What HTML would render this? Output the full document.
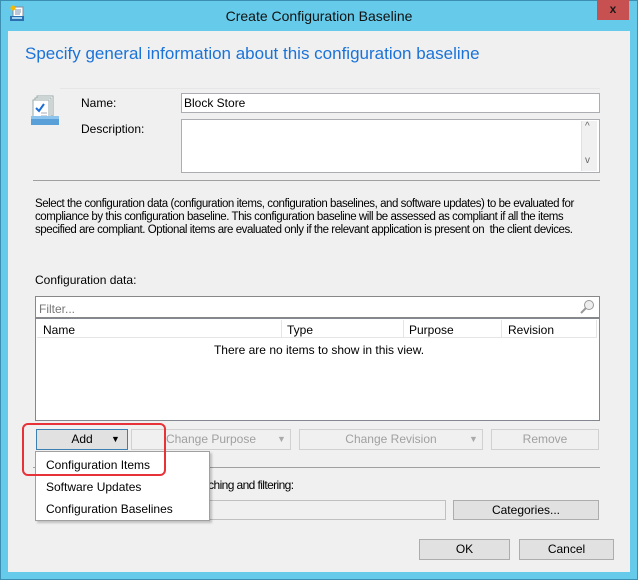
<!DOCTYPE html>
<html><head><style>
*{margin:0;padding:0;box-sizing:border-box}
body{width:638px;height:580px;background:#66cbea;font-family:"Liberation Sans",sans-serif;font-size:12px;color:#000;position:relative;overflow:hidden}
.a{position:absolute}
.box{position:absolute;background:#fff;border:1px solid #abadb3}
.btn{position:absolute;background:#e1e1e1;border:1px solid #adadad;text-align:center;line-height:18px}
.dis{background:#f0f0f0;border-color:#d0d0d0;color:#a0a0a0}
.t{position:absolute;white-space:nowrap;transform-origin:0 0}
</style></head><body>
<div class="a" style="left:0;top:0;width:638px;height:580px;border:1px solid #3c8fb0"></div>
<div class="a" style="left:597px;top:0;width:32px;height:20px;background:#c75050;font-weight:bold;text-align:center;line-height:19px;font-size:12px;color:#1a1a1a">x</div>
<svg class="a" style="left:8px;top:5px" width="18" height="18"><rect x="5" y="2" width="10" height="10" fill="#fff" stroke="#889"/><path d="M7 5h6M7 7h6M7 9h5" stroke="#7a8fb0"/><rect x="2" y="11" width="14" height="5" fill="#2a6fb0"/><rect x="4" y="12" width="10" height="2" fill="#9fd0f0"/><circle cx="5" cy="3" r="2.5" fill="#f5b800"/></svg>
<div class="t" style="left:0;width:638px;text-align:center;top:8px;font-size:14px;color:#111">Create Configuration Baseline</div>
<div class="a" style="left:8px;top:31px;width:622px;height:541px;background:#f0f0f0"></div>
<div class="t" style="left:25px;top:44px;font-size:17px;color:#1a73d9">Specify general information about this configuration baseline</div>
<div class="a" style="left:60px;top:88px;width:540px;height:1px;background:#e6e6e6"></div>
<svg class="a" style="left:28px;top:94px" width="34" height="34"><rect x="9" y="2" width="16" height="20" fill="#fff" stroke="#9aa"/><rect x="7" y="4" width="16" height="20" fill="#fff" stroke="#9aa"/><rect x="5" y="6" width="16" height="20" fill="#fff" stroke="#9aa"/><path d="M8 14l3 3 5-7" stroke="#1a6ed8" stroke-width="2" fill="none"/><path d="M13 19h6M13 22h6" stroke="#aab"/><path d="M3 22h28v9H3z" fill="#5aa0d8"/><path d="M3 22h28v3H3z" fill="#8cc4ee"/></svg>
<div class="t" style="left:81px;top:96px">Name:</div>
<div class="box" style="left:181px;top:93px;width:419px;height:20px"></div>
<div class="t" style="left:184px;top:96px">Block Store</div>
<div class="t" style="left:81px;top:122px">Description:</div>
<div class="box" style="left:181px;top:119px;width:419px;height:54px"></div>
<div class="a" style="left:581px;top:121px;width:16px;height:50px;background:#f0f0f0;border-left:1px solid #e0e0e0"></div>
<div class="t" style="left:585px;top:121px;font-size:10px;color:#666">^</div>
<div class="t" style="left:585px;top:155px;font-size:10px;color:#666">v</div>
<div class="a" style="left:33px;top:180px;width:567px;height:1px;background:#a0a0a0"></div>
<div class="t" style="left:35px;top:198px;font-size:11.5px;line-height:13px;letter-spacing:-0.45px">Select the configuration data (configuration items, configuration baselines, and software updates) to be evaluated for<br>compliance by this configuration baseline. This configuration baseline will be assessed as compliant if all the items<br>specified are compliant. Optional items are evaluated only if the relevant application is present on &nbsp;the client devices.</div>
<div class="t" style="left:35px;top:273px">Configuration data:</div>
<div class="box" style="left:35px;top:296px;width:565px;height:22px;border-color:#888"></div>
<div class="t" style="left:39px;top:302px;color:#777">Filter...</div>
<svg class="a" style="left:579px;top:299px" width="16" height="16"><circle cx="10" cy="6" r="4.5" fill="#eee" stroke="#999"/><path d="M7 9l-5 5" stroke="#999" stroke-width="2"/></svg>
<div class="box" style="left:35px;top:318px;width:565px;height:103px;border-color:#828790"></div>
<div class="a" style="left:37px;top:320px;width:559px;height:18px;border-bottom:1px solid #e5e5e5"></div>
<div class="a" style="left:281px;top:320px;width:1px;height:18px;background:#e5e5e5"></div>
<div class="a" style="left:403px;top:320px;width:1px;height:18px;background:#e5e5e5"></div>
<div class="a" style="left:501px;top:320px;width:1px;height:18px;background:#e5e5e5"></div>
<div class="a" style="left:596px;top:320px;width:1px;height:18px;background:#e5e5e5"></div>
<div class="t" style="left:43px;top:323px">Name</div>
<div class="t" style="left:287px;top:323px">Type</div>
<div class="t" style="left:409px;top:323px">Purpose</div>
<div class="t" style="left:508px;top:323px">Revision</div>
<div class="t" style="left:0;width:638px;text-align:center;top:343px">There are no items to show in this view.</div>
<div class="btn" style="left:36px;top:429px;width:92px;height:21px;border-color:#3c7fb1">Add<span style="position:absolute;left:74px;font-size:9px">▼</span></div>
<div class="btn dis" style="left:131px;top:429px;width:160px;height:21px">Change Purpose<span style="position:absolute;left:145px;font-size:9px;color:#aaa">▼</span></div>
<div class="btn dis" style="left:299px;top:429px;width:184px;height:21px">Change Revision<span style="position:absolute;left:169px;font-size:9px;color:#aaa">▼</span></div>
<div class="btn dis" style="left:491px;top:429px;width:108px;height:21px">Remove</div>
<div class="a" style="left:33px;top:467px;width:567px;height:1px;background:#a0a0a0"></div>
<div class="t" style="left:35px;top:478px;letter-spacing:-0.6px">Assigned categories to improve searching and filtering:</div>
<div class="box" style="left:35px;top:500px;width:411px;height:20px;background:#f0f0f0;border-color:#c0c0c0"></div>
<div class="btn" style="left:453px;top:500px;width:146px;height:20px">Categories...</div>
<div class="a" style="left:35px;top:451px;width:175px;height:70px;background:#fff;border:1px solid #a0a0a0;box-shadow:2px 2px 2px rgba(0,0,0,.2)"></div>
<div class="t" style="left:46px;top:458px">Configuration Items</div>
<div class="t" style="left:46px;top:480px">Software Updates</div>
<div class="t" style="left:46px;top:502px">Configuration Baselines</div>
<div class="a" style="left:22px;top:423px;width:144px;height:53px;border:2px solid #e8323a;border-radius:6px"></div>
<div class="btn" style="left:419px;top:539px;width:91px;height:21px">OK</div>
<div class="btn" style="left:519px;top:539px;width:95px;height:21px">Cancel</div>
</body></html>
